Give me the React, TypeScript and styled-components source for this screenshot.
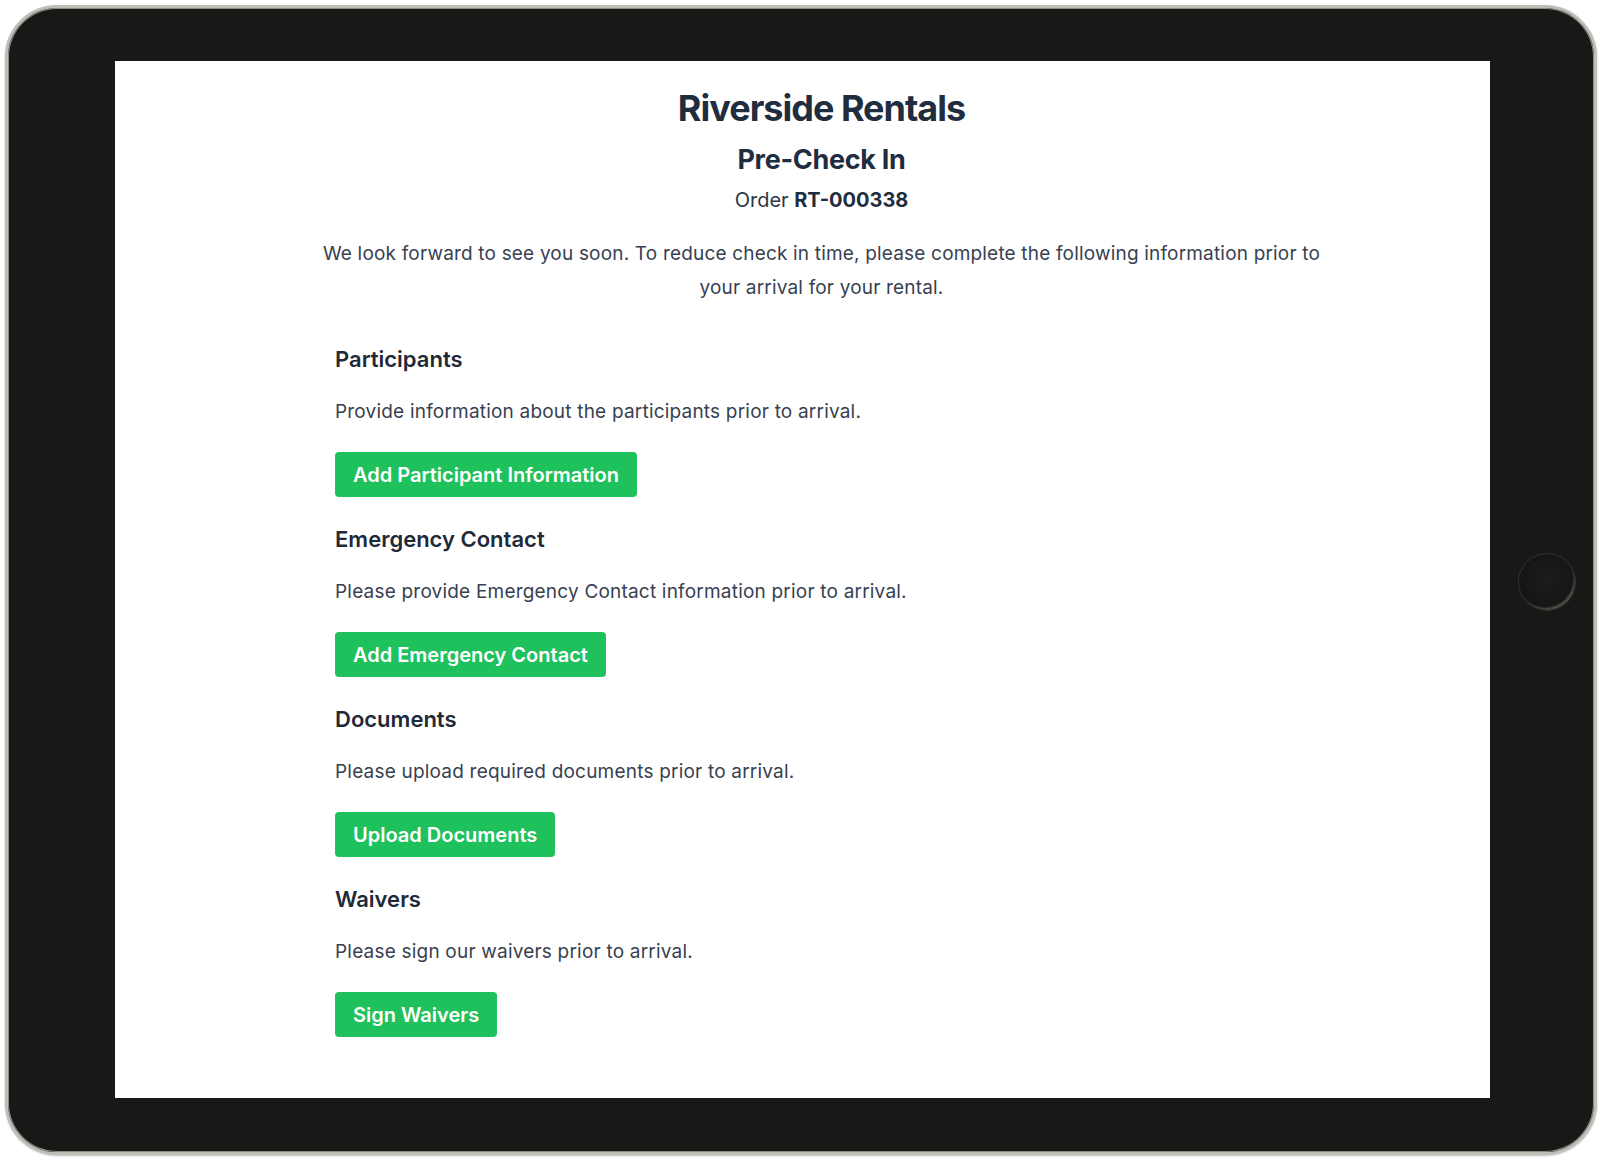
import React from "react";
import styled, { createGlobalStyle } from "styled-components";

const Global = createGlobalStyle`
  html, body { margin: 0; padding: 0; background: #ffffff; }
  body { font-family: Inter, "Noto Sans", "Liberation Sans", sans-serif; -webkit-font-smoothing: antialiased; }
  * { box-sizing: border-box; }
`;

const Stage = styled.div`
  width: 1600px;
  height: 1159px;
  padding: 5px 3px 4px 5px;
  background: #ffffff;
`;

const Device = styled.div`
  position: relative;
  width: 1592px;
  height: 1150px;
  border-radius: 52px;
  background: #1a1817;
  border: 3px solid #bebdb7;
  box-shadow: inset 0 0 0 1px #8d8c86, 0 1px 2px rgba(0,0,0,0.25);
  padding: 53px 104px 54px 107px;
  display: flex;
`;

const HomeButton = styled.div`
  position: absolute;
  left: 1510px;
  top: 545px;
  width: 58px;
  height: 58px;
  border-radius: 50%;
  border: 1px solid #34322f;
  background: radial-gradient(circle at 50% 45%, #1e1c1b 0%, #161514 70%);
  box-shadow: inset -2px -3px 2px -1px rgba(220,220,210,0.3);
`;

const Screen = styled.main`
  flex: 1;
  background: #ffffff;
  padding: 25px 150px 0 188px;
  color: #374151;
  overflow: hidden;
`;

const Header = styled.header`
  display: flex;
  flex-direction: column;
  align-items: center;
  text-align: center;
`;

const Title = styled.h1`
  margin: 0;
  font-size: 36px;
  line-height: 44px;
  font-weight: 700;
  color: #1f2d3f;
  letter-spacing: -1px;
`;

const Subtitle = styled.h2`
  margin: 13px 0 0;
  font-size: 27px;
  line-height: 34px;
  font-weight: 700;
  color: #1f2d3f;
  letter-spacing: -0.3px;
`;

const OrderLine = styled.div`
  margin-top: 10px;
  font-size: 20px;
  line-height: 26px;
  color: #2b3646;
  b { font-weight: 700; color: #1f2d3f; }
`;

const Intro = styled.p`
  margin: 24px 0 0;
  font-size: 19px;
  line-height: 34px;
  letter-spacing: 0.18px;
  color: #374151;
  text-align: center;
`;

const Sections = styled.div`
  display: flex;
  flex-direction: column;
  gap: 28px;
  margin-top: 40px;
  padding-left: 32px;
`;

const Section = styled.section`
  display: flex;
  flex-direction: column;
  align-items: flex-start;
`;

const SectionTitle = styled.h3`
  margin: 0;
  font-size: 22px;
  line-height: 28px;
  font-weight: 600;
  color: #1f2937;
`;

const SectionText = styled.p`
  margin: 25px 0 0;
  font-size: 19px;
  line-height: 28px;
  letter-spacing: 0.2px;
  color: #374151;
`;

const ActionButton = styled.button`
  margin-top: 26px;
  height: 45px;
  padding: 0 18px;
  border: none;
  border-radius: 4px;
  background: #1fc15c;
  color: #ffffff;
  font-family: inherit;
  font-size: 20px;
  font-weight: 600;
  cursor: pointer;
`;

const sections = [
  {
    title: "Participants",
    text: "Provide information about the participants prior to arrival.",
    action: "Add Participant Information",
  },
  {
    title: "Emergency Contact",
    text: "Please provide Emergency Contact information prior to arrival.",
    action: "Add Emergency Contact",
  },
  {
    title: "Documents",
    text: "Please upload required documents prior to arrival.",
    action: "Upload Documents",
  },
  {
    title: "Waivers",
    text: "Please sign our waivers prior to arrival.",
    action: "Sign Waivers",
  },
];

export default function App() {
  return (
    <Stage>
      <Global />
      <Device>
        <Screen>
          <Header>
            <Title>Riverside Rentals</Title>
            <Subtitle>Pre-Check In</Subtitle>
            <OrderLine>
              Order <b>RT-000338</b>
            </OrderLine>
            <Intro>
              We look forward to see you soon. To reduce check in time, please complete the following information prior to
              <br />
              your arrival for your rental.
            </Intro>
          </Header>
          <Sections>
            {sections.map((s) => (
              <Section key={s.title}>
                <SectionTitle>{s.title}</SectionTitle>
                <SectionText>{s.text}</SectionText>
                <ActionButton type="button">{s.action}</ActionButton>
              </Section>
            ))}
          </Sections>
        </Screen>
        <HomeButton />
      </Device>
    </Stage>
  );
}
